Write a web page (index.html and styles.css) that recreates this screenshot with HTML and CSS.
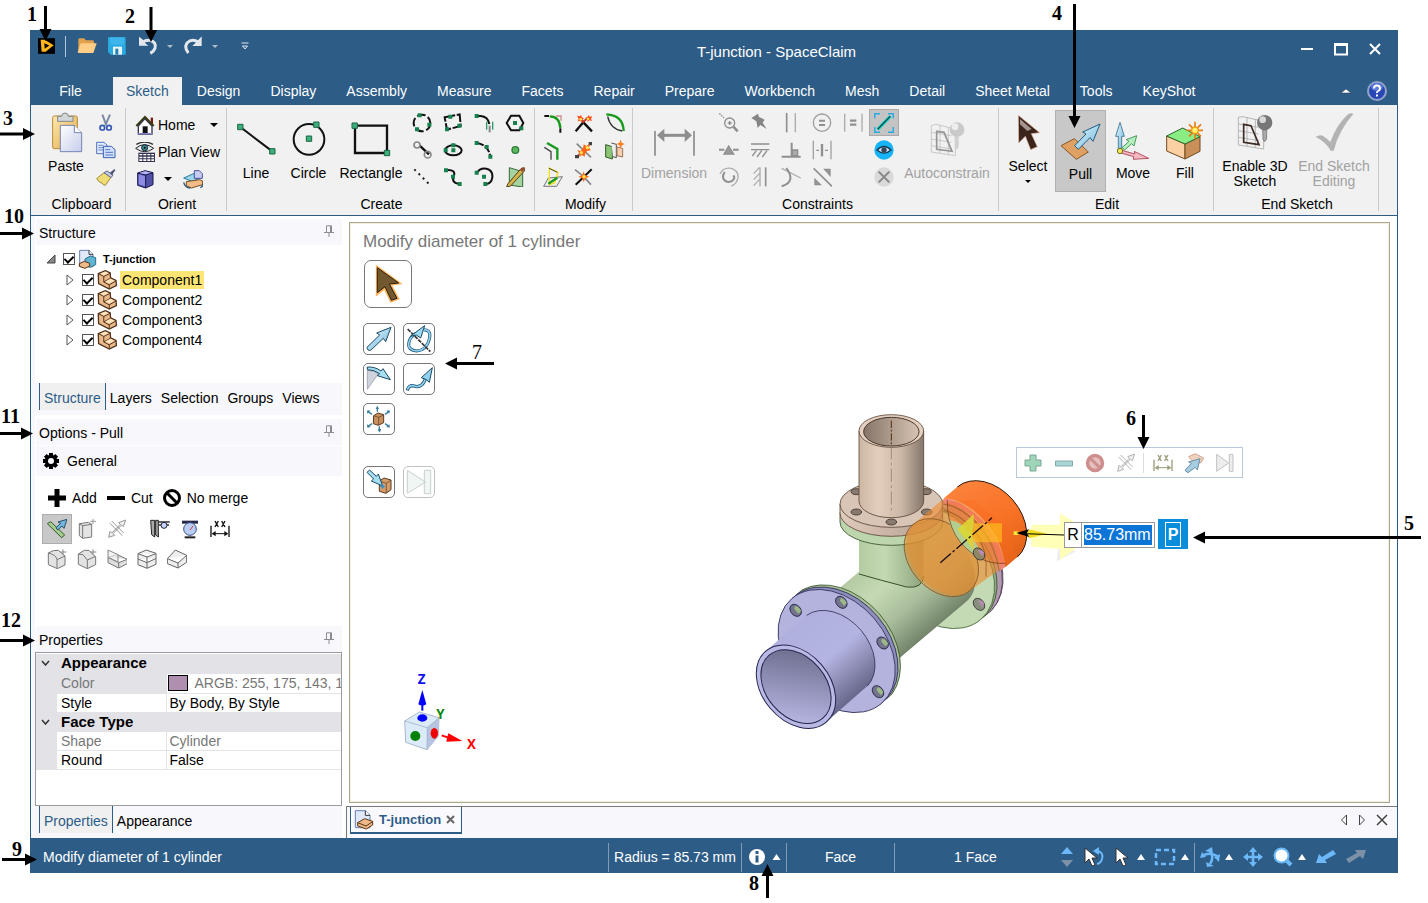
FILE: index.html
```html
<!DOCTYPE html>
<html lang="en">
<head>
<meta charset="utf-8">
<title>T-junction - SpaceClaim</title>
<link rel="stylesheet" href="styles.css">
</head>
<body>
<svg class="defs" aria-hidden="true">
  <defs>
    <linearGradient id="steel" x1="0" y1="0" x2="1" y2="1"><stop offset="0" stop-color="#e4f6fd"/><stop offset="1" stop-color="#6fb9dc"/></linearGradient>
    <linearGradient id="gold" x1="0" y1="0" x2="1" y2="1"><stop offset="0" stop-color="#ffe9b0"/><stop offset="1" stop-color="#e0aa45"/></linearGradient>
    <linearGradient id="paper" x1="0" y1="0" x2="1" y2="1"><stop offset="0" stop-color="#ffffff"/><stop offset="1" stop-color="#c5cdea"/></linearGradient>
    <linearGradient id="wood" x1="0" y1="0" x2="1" y2="1"><stop offset="0" stop-color="#fbd7ae"/><stop offset="1" stop-color="#c58350"/></linearGradient>
    <symbol id="pin" viewBox="0 0 10 12"><path d="M2.500 7V.8h5V7M6.500 1v6M0 7.500h10M5 7.500V12" fill="none" stroke="#8b8b90"/></symbol>
    <symbol id="part" viewBox="288 190 62 60"><path d="M292 200l22-9 15 7 1 15 17 8 1 16-22 11-33-17z" fill="#e9b98a" stroke="#4d2f1a" stroke-width="4"/><path d="M294 201l15 8 20-10M309 209v17l17 9 21-12M326 235v12M309 226l20-11" fill="none" stroke="#4d2f1a" stroke-width="3"/><path d="M298 200l16-6 10 5-15 7zM313 225l17-9 12 6-16 9z" fill="#ffe3bf"/></symbol>
    <symbol id="tri-up" viewBox="0 0 8 6"><path d="M0 6L4 0l4 6z" fill="#fff"/></symbol>
    <symbol id="tri-down" viewBox="0 0 8 4"><path d="M0 0h8L4 4z" fill="currentColor"/></symbol>
    <symbol id="widthmark" viewBox="0 0 60 60"><path d="M3 20v34M57 20v34" stroke="currentColor" stroke-width="4"/><path d="M10 44h40" stroke="currentColor" stroke-width="3"/><path d="M5 44l12-8v16zM55 44l-12-8v16z" fill="currentColor"/><path d="M15 6l10 18M25 6L15 24M35 6l10 18M45 6L35 24" stroke="currentColor" stroke-width="4"/></symbol>
    <symbol id="twoway" viewBox="0 0 60 60"><path d="M5 55l4-18 5 5 26-26-5-5L56 3l-7 20-5-5-26 26 5 5zM8 12l38 38M14 6l36 36" fill="#eee" stroke="currentColor" stroke-width="3"/></symbol>
  </defs>
</svg>

<div class="app">
  <header class="top">
    <div class="titlebar">
      <div class="quick">
        <button class="q q-logo" aria-label="Application"><svg width="17" height="16" viewBox="114 112 51 47"><path d="M114 112h51v47h-51z" fill="#000"/><path d="M122 117h12l27 16-24 20h-12z" fill="#ffb71b"/><path d="M133 127l15 7-14 10z" fill="#000"/></svg></button>
        <span class="qsep"></span>
        <button class="q q-open" aria-label="Open"><svg width="20" height="18" viewBox="226 112 60 54"><path d="M230 120q0-4 5-4h12l6 6h20q4 0 4 5v30h-47z" fill="#e0a04c"/><path d="M228 158l9-27h48l-10 29h-44z" fill="#ffce86"/></svg></button>
        <button class="q q-save" aria-label="Save"><svg width="18" height="18" viewBox="324 108 54 54"><path d="M324 109h53v52h-45l-8-8z" fill="#29abe2"/><path d="M330 109h42v22h-42z" fill="#3db5ea"/><path d="M339 137h27v24h-27z" fill="#e9f5fb"/><path d="M346 143h9v18h-9z" fill="#2681ad"/></svg></button>
        <button class="q q-undo" aria-label="Undo"><svg width="20" height="20" viewBox="414 106 60 60"><path d="M426 127q10-10 24-8 20 5 15 24-3 9-14 15" fill="none" stroke="#e4e8ee" stroke-width="9"/><path d="M417 108v27h28l-10-8-8-11z" fill="#e4e8ee"/></svg></button>
        <button class="q q-more" aria-label="Undo list"><svg width="6" height="3"><use href="#tri-down"/></svg></button>
        <button class="q q-redo" aria-label="Redo"><svg width="20" height="20" viewBox="550 106 60 60"><path d="M597 125q-20-13-35 2-9 15 4 30" fill="none" stroke="#e4e8ee" stroke-width="9"/><path d="M606 107v29h-28l9-9 11-11z" fill="#e4e8ee"/></svg></button>
        <button class="q q-more" aria-label="Redo list"><svg width="6" height="3"><use href="#tri-down"/></svg></button>
        <button class="q q-custom" aria-label="Customize"><svg width="8" height="9" viewBox="0 0 8 9"><path d="M.5 1h7M1.500 4h5L4 7z" fill="none" stroke="#e4e8ee"/></svg></button>
      </div>
      <h1 class="title">T-junction - SpaceClaim</h1>
      <div class="winbtns">
        <button aria-label="Minimize"><svg width="14" height="14"><path d="M1 7h12" stroke="#fff" stroke-width="2"/></svg></button>
        <button aria-label="Maximize"><svg width="14" height="14"><path d="M1 2h12v10.500H1zM1 3h12" fill="none" stroke="#fff" stroke-width="2"/></svg></button>
        <button aria-label="Close"><svg width="14" height="14"><path d="M2 2l10 10M12 2L2 12" stroke="#fff" stroke-width="2"/></svg></button>
      </div>
    </div>
    <nav class="tabs">
      <button class="tab file">File</button><button class="tab on">Sketch</button><button class="tab">Design</button><button class="tab">Display</button><button class="tab">Assembly</button><button class="tab">Measure</button><button class="tab">Facets</button><button class="tab">Repair</button><button class="tab">Prepare</button><button class="tab">Workbench</button><button class="tab">Mesh</button><button class="tab">Detail</button><button class="tab">Sheet Metal</button><button class="tab">Tools</button><button class="tab">KeyShot</button>
      <div class="tabs-end">
        <button aria-label="Collapse ribbon"><svg width="10" height="6" viewBox="0 0 10 6"><path d="M0 5l5-4 5 4z" fill="#fff" stroke="#334" stroke-width=".5"/></svg></button>
        <button aria-label="Help"><svg width="20" height="20" viewBox="0 0 20 20"><circle cx="10" cy="10" r="9" fill="#2847b4" stroke="#93a4c8" stroke-width="2"/><ellipse cx="10" cy="6" rx="6" ry="4" fill="#5b7bdc"/><path d="M7 7.500q0-3 3-3t3 3q0 1.500-1.700 2.500T10 12M10 13.500v2" fill="none" stroke="#fff" stroke-width="2"/></svg></button>
      </div>
    </nav>
  </header>

  <div class="ribbon">
    <section class="group g-clip">
      <div class="gbody">
        <button class="tool high"><svg viewBox="132 333 132 132"><rect x="158" y="348" width="74" height="98" rx="5" fill="url(#gold)" stroke="#b98a35" stroke-width="3"/><path d="M173 349h12q0-10 10-10t10 10h14v15h-46z" fill="#d4d7da" stroke="#83888c" stroke-width="3"/><path d="M181 376h42l22 22v57h-64z" fill="url(#paper)" stroke="#7484b5" stroke-width="3"/><path d="M223 376v22h22" fill="#fff" stroke="#7484b5" stroke-width="3"/></svg><span>Paste</span></button>
        <div class="stack">
          <button class="ib" aria-label="Cut"><svg viewBox="290 340 60 60"><path d="M309 345l12 32M332 345l-14 32" stroke="#7d8ca3" stroke-width="6"/><circle cx="309" cy="384" r="7" fill="none" stroke="#355bb5" stroke-width="5"/><circle cx="329" cy="384" r="7" fill="none" stroke="#355bb5" stroke-width="5"/></svg></button>
          <button class="ib" aria-label="Copy"><svg viewBox="290 418 60 60"><path d="M292 425h22l9 8v26h-31z" fill="#e4ecff" stroke="#5174bb" stroke-width="3"/><path d="M297 434h15M297 441h20M297 448h20" stroke="#5174bb" stroke-width="2.500"/><path d="M312 437h24l11 10v24h-35z" fill="#d2e0ff" stroke="#3c62ad" stroke-width="3"/><path d="M318 447h14M318 455h23M318 463h23" stroke="#3c62ad" stroke-width="2.500"/></svg></button>
          <button class="ib" aria-label="Format painter"><svg viewBox="290 500 60 60"><path d="M292 535l22-18 21 14-17 24q-8-1-10-7-9-1-16-13z" fill="#f0dd76" stroke="#9a8732" stroke-width="3"/><path d="M314 517l9-5 18 12-6 8z" fill="#c7cbe1" stroke="#63688e" stroke-width="3"/><path d="M331 518l14-12 3 4-10 14z" fill="#4f5577"/></svg></button>
        </div>
      </div>
      <h2>Clipboard</h2>
    </section>

    <section class="group g-orient">
      <div class="gbody orient">
        <button class="line"><svg viewBox="405 340 60 60"><path d="M452 348h7v20h-7z" fill="#7a1a14"/><path d="M415 373l20-22 21 22v24h-41z" fill="#fff" stroke="#34345a" stroke-width="4"/><path d="M409 373l26-27 26 27" fill="none" stroke="#3a3a14" stroke-width="6"/><path d="M428 374h15v22h-15z" fill="#111"/><path d="M414 396h42" stroke="#8484c8" stroke-width="4"/></svg><span>Home</span><svg class="caret" width="8" height="4"><use href="#tri-down"/></svg></button>
        <button class="line"><svg viewBox="405 420 60 60"><path d="M409 427q25-13 50 0" fill="none" stroke="#333" stroke-width="4"/><path d="M407 439q26-22 54 0-27 20-54 0z" fill="#e9eef0" stroke="#222" stroke-width="3"/><circle cx="434" cy="437" r="9" fill="#3f8c97" stroke="#123" stroke-width="3"/><circle cx="434" cy="437" r="3"/><path d="M415 452h50v28h-50z" fill="#33334f"/><path d="M418 456h9v4h-9zm12 0h9v4h-9zm12 0h9v4h-9zm12 0h8v4h-8zM418 464h9v5h-9zm12 0h9v5h-9zm12 0h9v5h-9zm12 0h8v5h-8zM418 472h9v5h-9zm12 0h9v5h-9zm12 0h9v5h-9zm12 0h8v5h-8z" fill="#fff"/></svg><span>Plan View</span></button>
        <div class="line">
          <button class="ib" aria-label="Isometric"><svg viewBox="405 500 60 60"><path d="M413 512l22-7 24 6v36l-22 10-24-8z" fill="#5252a8" stroke="#17174c" stroke-width="3"/><path d="M413 512l24 6 22-7M437 518v38" fill="none" stroke="#17174c" stroke-width="3"/><path d="M416 516l19 5v31l-19-6z" fill="#8c8ce0"/><path d="M418 512l17-5 18 4-16 5z" fill="#b9b9f4"/></svg></button>
          <svg class="caret" width="8" height="4"><use href="#tri-down"/></svg>
          <button class="ib spin" aria-label="Spin"><svg viewBox="548 500 60 60"><path d="M550 527l32-14 25 9-30 16z" fill="#9ad5ec" stroke="#317a9c" stroke-width="3"/><path d="M558 538l40-6 9 4v11l-34 10-15-7z" fill="#f1bd87" stroke="#7a4a22" stroke-width="3"/><path d="M582 505h15l9 9v14h-24z" fill="#c6cdf0" stroke="#47549e" stroke-width="3"/><path d="M550 540q4 16 20 17M600 556q8-3 8-12" fill="none" stroke="#2d5878" stroke-width="4"/></svg></button>
        </div>
      </div>
      <h2>Orient</h2>
    </section>

    <section class="group g-create">
      <div class="gbody">
        <button class="tool w-line"><svg viewBox="702 351 132 132"><path d="M721 381l96 73" stroke="#111" stroke-width="6"/><path d="M713 373h16v16h-16zM809 446h16v16h-16z" fill="#3fae7c" stroke="#176844" stroke-width="3"/></svg><span>Line</span></button>
        <button class="tool w-circle"><svg viewBox="858 351 132 132"><circle cx="924" cy="418" r="46" fill="none" stroke="#111" stroke-width="6"/><path d="M938 366h16v16h-16zM916 408h16v16h-16z" fill="#3fae7c" stroke="#176844" stroke-width="3"/></svg><span>Circle</span></button>
        <button class="tool w-rect"><svg viewBox="1046 351 132 132"><path d="M1064 377h96v82h-96z" fill="none" stroke="#111" stroke-width="7"/><path d="M1055 369h16v16h-16zM1152 451h16v16h-16z" fill="#3fae7c" stroke="#176844" stroke-width="3"/></svg><span>Rectangle</span></button>
        <div class="icons c4">
          <button class="ib" aria-label="Three-point circle"><svg viewBox="37 130 60 60"><circle cx="67" cy="160" r="25" fill="none" stroke="#111" stroke-width="6" stroke-dasharray="26 8"/><path d="M54 131h12v12H54zM83 159h12v12H83zM46 173h12v12H46z" fill="#17804f"/></svg></button>
          <button class="ib" aria-label="Three-point rectangle"><svg viewBox="132 130 60 60"><path d="M137 143l45-9 3 35-41 11z" fill="none" stroke="#111" stroke-width="6" stroke-dasharray="32 5"/><path d="M148 135h12v12h-12zM175 162h12v12h-12zM138 173h12v12h-12z" fill="#17804f"/></svg></button>
          <button class="ib" aria-label="Tangent arc"><svg viewBox="226 130 60 60"><path d="M232 139h14q22 2 26 24" fill="none" stroke="#111" stroke-width="6"/><path d="M264 156v24M282 156v24" stroke="#2e9a68" stroke-width="4"/><path d="M273 168v20" stroke="#888" stroke-width="6"/><path d="M228 133h12v12h-12z" fill="#17804f"/></svg></button>
          <button class="ib" aria-label="Polygon"><svg viewBox="316 130 60 60"><path d="M321 160l13-22h25l12 22-12 22h-25z" fill="none" stroke="#111" stroke-width="6"/><path d="M340 154h12v12h-12zM359 170h12v12h-12z" fill="#17804f"/></svg></button>
          <button class="ib" aria-label="Tangent line"><svg viewBox="37 210 60 60"><path d="M60 227l28 26" stroke="#111" stroke-width="7"/><circle cx="52" cy="225" r="9" fill="none" stroke="#888" stroke-width="5"/><circle cx="84" cy="254" r="10" fill="none" stroke="#888" stroke-width="5"/></svg></button>
          <button class="ib" aria-label="Ellipse"><svg viewBox="132 210 60 60"><ellipse cx="163" cy="241" rx="25" ry="15" fill="none" stroke="#111" stroke-width="6"/><path d="M157 220h12v12h-12zM157 235h12v12h-12zM134 235h12v12h-12z" fill="#17804f"/></svg></button>
          <button class="ib" aria-label="Three-point arc"><svg viewBox="226 210 60 60"><path d="M234 219q35 5 41 41" fill="none" stroke="#111" stroke-width="6" stroke-dasharray="22 5"/><path d="M228 213h12v12h-12zM258 225h12v12h-12zM269 254h12v12h-12z" fill="#17804f"/></svg></button>
          <button class="ib" aria-label="Point"><svg viewBox="316 210 60 60"><circle cx="347" cy="240" r="10" fill="#5cb85c" stroke="#2b7c38" stroke-width="4"/></svg></button>
          <button class="ib" aria-label="Construction line"><svg viewBox="37 290 60 60"><path d="M44 297l48 48" stroke="#222" stroke-width="6" stroke-dasharray="6 12"/></svg></button>
          <button class="ib" aria-label="Spline"><svg viewBox="132 290 60 60"><path d="M141 299q32-3 23 20-8 19 18 22" fill="none" stroke="#111" stroke-width="6"/><path d="M135 294h12v12h-12zM156 313h12v12h-12zM176 335h12v12h-12z" fill="#17804f"/></svg></button>
          <button class="ib" aria-label="Sweep arc"><svg viewBox="226 290 60 60"><path d="M235 308q8-16 28-13 20 4 18 26-3 20-20 20" fill="none" stroke="#111" stroke-width="6"/><path d="M228 301h12v12h-12zM250 313h12v12h-12zM254 335h12v12h-12z" fill="#17804f"/></svg></button>
          <button class="ib" aria-label="Face curve"><svg viewBox="316 290 60 60"><path d="M329 292l40 12v46l-40-6z" fill="#a5d4a0" stroke="#35693a" stroke-width="3"/><path d="M324 341l40-46 10-3v10l-41 45-12 3z" fill="#d3b44b" stroke="#54401d" stroke-width="3"/><path d="M360 298l8-7 7 6-7 8z" fill="#9b4a2f"/></svg></button>
        </div>
      </div>
      <h2>Create</h2>
    </section>

    <section class="group g-modify">
      <div class="gbody">
        <div class="icons c3">
          <button class="ib" aria-label="Rounded corner"><svg viewBox="432 130 60 60"><path d="M436 139h14M484 176v13" stroke="#111" stroke-width="6"/><path d="M452 140q30 0 32 35" fill="none" stroke="#179a1c" stroke-width="7"/><path d="M471 139h15v14" fill="none" stroke="#c98f8f" stroke-width="4"/></svg></button>
          <button class="ib" aria-label="Trim away"><svg viewBox="522 130 60 60"><path d="M527 185l23-27 26 27" fill="none" stroke="#111" stroke-width="7"/><path d="M539 144l11 13 13-13" stroke="#c43c2a" fill="none" stroke-width="6"/><path d="M531 138l8 2 5-4 1 7 7 3-6 4v8l-6-5-7 2 3-8zM557 145l6-3 2-6 4 5 8-1-4 7 3 7-8-2-5 5-1-7z" fill="#ff4a16"/><circle cx="542" cy="149" r="4" fill="#ffe54a"/><circle cx="564" cy="148" r="4" fill="#ffe54a"/></svg></button>
          <button class="ib" aria-label="Offset curve"><svg viewBox="612 130 60 60"><path d="M616 134q50 2 52 50" fill="none" stroke="#179a1c" stroke-width="7"/><path d="M620 140q8 38 44 44" fill="none" stroke="#333" stroke-width="4"/></svg></button>
          <button class="ib" aria-label="Offset"><svg viewBox="432 210 60 60"><path d="M444 219l31 18v32" fill="none" stroke="#179a1c" stroke-width="7"/><path d="M436 232l20 13v24" fill="none" stroke="#444" stroke-width="4"/></svg></button>
          <button class="ib" aria-label="Split"><svg viewBox="522 210 60 60"><path d="M530 221l43 41M527 262l48-44" stroke="#888" stroke-width="5"/><path d="M525 255h12v10h-12zM566 216h10v10h-10z" fill="#444"/><path d="M532 240l10 3 8-11 1-9 8 5 10-5-2 10 6 8-11 1-7 10-1 9-8-6-9 5 1-10z" fill="#ff6218"/><circle cx="544" cy="248" r="5" fill="#ffe54a"/><circle cx="562" cy="233" r="5" fill="#ffe54a"/></svg></button>
          <button class="ib" aria-label="Replicate"><svg viewBox="612 210 60 60"><path d="M614 224l20 6v37l-20-6z" fill="#8cc475" stroke="#2f5c2b" stroke-width="3"/><path d="M631 219l15 4v40l-10-3" fill="#eee" stroke="#555" stroke-width="3"/><path d="M648 231l17 4v26l-17-4z" fill="#f7cfae" stroke="#9c7759" stroke-width="3"/><path d="M659 208l3 10 10 4-9 4-4 10-4-10-9-4 9-4z" fill="#ff8425"/></svg></button>
          <button class="ib" aria-label="Project"><svg viewBox="432 290 60 60"><path d="M434 348l14-25 42-4-17 29z" fill="#eee" stroke="#777" stroke-width="3"/><path d="M451 293v50l16-5 10-32z" fill="none" stroke="#f3e11a" stroke-width="4"/><path d="M450 294l25 12" stroke="#444" stroke-width="3"/><path d="M448 340l27-18" stroke="#179a1c" stroke-width="7"/></svg></button>
          <button class="ib" aria-label="Split at point"><svg viewBox="522 290 60 60"><path d="M525 298l25 20 23 25" fill="none" stroke="#888" stroke-width="5"/><path d="M527 343l48-46" stroke="#111" stroke-width="6"/><path d="M551 303l4 11 13 5-12 5-5 12-4-12-12-5 12-4z" fill="#ff681c"/><circle cx="552" cy="319" r="5" fill="#ffe83b"/></svg></button>
        </div>
      </div>
      <h2>Modify</h2>
    </section>

    <section class="group g-cons">
      <div class="gbody">
        <button class="tool w-dim" disabled><svg viewBox="67 141 132 132"><path d="M76 183v74M193 183v74" stroke="#9c9c9c" stroke-width="6"/><path d="M92 196h84" stroke="#8e8e8e" stroke-width="9"/><path d="M82 196l22-20v40zM187 196l-22-20v40z" fill="#8e8e8e"/></svg><span>Dimension</span></button>
        <div class="icons c6 gray">
          <button class="ib" aria-label="Show constraints"><svg viewBox="267 130 60 60"><path d="M268 131l14 14" stroke-dasharray="5 3"/><circle cx="299" cy="160" r="15"/><path d="M310 171l13 14" stroke-width="8"/><path d="M293 160h12M299 154v12"/></svg></button>
          <button class="ib" aria-label="Fix"><svg viewBox="359 130 60 60"><path d="M363 145l20-13 3 10 17 8-6 9 12 19-19-12-8 9-4-20z" fill="#858585" stroke="none"/></svg></button>
          <button class="ib" aria-label="Parallel"><svg viewBox="452 130 60 60"><path d="M469 130v58" stroke-width="5"/><path d="M495 130v58" opacity=".7"/></svg></button>
          <button class="ib" aria-label="Equal radius"><svg viewBox="545 130 60 60"><circle cx="575" cy="159" r="26" opacity=".85"/><path d="M566 153h18M566 166h18" stroke-width="6"/></svg></button>
          <button class="ib" aria-label="Equal distance"><svg viewBox="637 130 60 60"><path d="M642 132v54M694 132v54" opacity=".7"/><path d="M658 153h19M658 165h19" stroke-width="7"/></svg></button>
          <button class="ib sel" aria-label="Auto dimension"><svg viewBox="732 129 60 60"><path d="M734 145v-14h16M774 131h16v14M734 171v16h16M774 187h16v-16" stroke="#2ca9df" stroke-width="5"/><path d="M743 178l38-39" stroke="#16d9d0" stroke-width="10"/><path d="M743 178l38-39" stroke="#064d4a" stroke-width="4"/></svg></button>
          <button class="ib" aria-label="Midpoint"><svg viewBox="267 210 60 60"><path d="M267 239h16M309 239h17" stroke-width="6"/><path d="M282 252l14-24 15 24z" fill="#999"/></svg></button>
          <button class="ib" aria-label="Coincident"><svg viewBox="359 210 60 60"><path d="M362 222h55M362 239h55M378 242l-12 16M394 242l-14 19M410 242l-14 19"/></svg></button>
          <button class="ib" aria-label="Perpendicular"><svg viewBox="452 210 60 60"><path d="M484 218v42M454 260h57" stroke-width="6"/><path d="M486 240h16v17h-16z" fill="#aaa"/></svg></button>
          <button class="ib" aria-label="Symmetric"><svg viewBox="545 210 60 60"><path d="M549 212v56M602 212v56" opacity=".8"/><path d="M575 222v37" stroke-width="7"/><path d="M558 241h8M584 241h9"/></svg></button>
          <i></i>
          <button class="ib" aria-label="Visibility"><svg viewBox="732 210 60 60"><circle cx="762" cy="240" r="29" fill="#16b4f4" stroke="none"/><path d="M741 240q21-21 42 0-21 19-42 0z" fill="#cdf" stroke="#123b50" stroke-width="4"/><circle cx="762" cy="240" r="8" fill="#345" stroke="none"/></svg></button>
          <button class="ib" aria-label="Concentric"><svg viewBox="267 290 60 60"><path d="M270 311q10-21 34-17 22 7 20 28-4 20-20 25" opacity=".7"/><path d="M284 305q-11 17 2 27 15 8 25-5 4-7-1-12" stroke-width="6"/></svg></button>
          <button class="ib" aria-label="Hatched"><svg viewBox="359 290 60 60"><path d="M389 291v57M387 292l-17 18M387 310l-17 18M387 328l-17 18" opacity=".7"/><path d="M406 291v57" stroke-width="5"/></svg></button>
          <button class="ib" aria-label="Tangent"><svg viewBox="452 290 60 60"><path d="M454 294l57 29" opacity=".7"/><path d="M468 293q30 42-14 55" stroke-width="6"/></svg></button>
          <button class="ib" aria-label="Mirror"><svg viewBox="545 290 60 60"><path d="M550 294l55 54" stroke-width="5"/><path d="M583 297h16v18zM554 327v16h16z" fill="#999"/></svg></button>
          <i></i>
          <button class="ib" aria-label="Remove constraints"><svg viewBox="732 290 60 60"><circle cx="762" cy="320" r="29" fill="#d9d9d9" stroke="none"/><path d="M746 304l32 32M778 304l-32 32" stroke="#868686" stroke-width="6"/></svg></button>
        </div>
        <button class="tool w-auto" disabled><svg viewBox="885 141 132 132" opacity=".75"><path d="M904 167l14-4 58 14v80l-72-11zM904 187l60 10M904 207l60 10M904 227l62 10M930 166v84M955 172v82" fill="none" stroke="#b1b1b1" stroke-width="2.500"/><path d="M920 184l22 3 24 57-46-6z" fill="none" stroke="#777" stroke-width="5"/><circle cx="981" cy="179" r="22" fill="#bdbdbd"/><circle cx="975" cy="170" r="10" fill="#eee"/><path d="M974 201l12-2v30l-5 10-5-8z" fill="#c5c5c5"/></svg><span>Autoconstrain</span></button>
      </div>
      <h2>Constraints</h2>
    </section>

    <section class="group g-edit">
      <div class="gbody">
        <button class="tool high w-sel"><svg viewBox="18 333 132 132"><path d="M55 346l64 52-25 3 18 39-20 9-16-40-20 20z" fill="#3a241c" stroke="#e8b9a0" stroke-width="2"/><path d="M60 357l35 30-13 6-22-20z" fill="#a59490"/></svg><span>Select</span><svg class="caret" width="6" height="3"><use href="#tri-down"/></svg></button>
        <button class="tool on w-pull"><svg viewBox="175 360 132 132"><path d="M181 440l40-21 42 40-36 22z" fill="#dfa163" stroke="#8a5525" stroke-width="3"/><path d="M222 440l34-35-10-6 52-24-21 52-9-11-35 35z" fill="url(#steel)" stroke="#245b80" stroke-width="3"/></svg><span>Pull</span></button>
        <button class="tool w-move"><svg viewBox="334 351 132 132"><path d="M356 450v-41h-8l13-42 13 42h-8v41z" fill="url(#steel)" stroke="#3a6e8d" stroke-width="2.500"/><path d="M367 443l21-19-8-5 31-12-8 31-7-7-21 19z" fill="#b5efc0" stroke="#2d8a45" stroke-width="2.500"/><path d="M367 451l39 11-2-8 43 21-46 3 1-8-38-11z" fill="#f4b9c1" stroke="#a8384b" stroke-width="2.500"/><circle cx="361" cy="453" r="8" fill="#efe95a" stroke="#77701f" stroke-width="3"/></svg><span>Move</span></button>
        <button class="tool w-fill"><svg viewBox="489 351 132 132"><path d="M500 408l55 24v45l-55-24z" fill="#fbd0a3" stroke="#734a23" stroke-width="3"/><path d="M555 432l45-22v44l-45 23z" fill="#c98f58" stroke="#734a23" stroke-width="3"/><path d="M500 408l48-24 52 26-45 22z" fill="#8aed83" stroke="#2b6430" stroke-width="3"/><path d="M585 365v52M560 391h49M567 373l36 36M603 373l-36 36" stroke="#e67e16" stroke-width="5"/><circle cx="585" cy="391" r="10" fill="#fff36b" stroke="#f19b19" stroke-width="4"/></svg><span>Fill</span></button>
      </div>
      <h2>Edit</h2>
    </section>

    <section class="group g-end">
      <div class="gbody">
        <button class="tool high w-enable"><svg viewBox="701 333 132 132"><path d="M717 352l14-2 62 14v83l-76-12zM717 372l60 10M717 392l60 10M717 412l62 10M743 352v86M768 358v84" fill="none" stroke="#aaa" stroke-width="2.500"/><path d="M733 373l22 4 24 57-46-7z" fill="none" stroke="#3c2b22" stroke-width="5"/><circle cx="796" cy="368" r="23" fill="#777"/><circle cx="790" cy="359" r="10" fill="#d7d7d7"/><path d="M790 391l12-2v28l-6 8-5-6z" fill="#aaa" stroke="#666" stroke-width="2"/></svg><span>Enable 3D<br>Sketch</span></button>
        <button class="tool high w-finish" disabled><svg viewBox="937 333 132 132"><path d="M948 410q14-8 22-2 14 9 22 18 20-55 54-84 10-4 15 0-43 48-59 110h-9q-12-24-45-42z" fill="#b3b3b3"/></svg><span>End Sketch<br>Editing</span></button>
      </div>
      <h2>End Sketch</h2>
    </section>
  </div>

  <div class="work">
    <aside class="side">
      <section class="panel p-structure">
        <h2 class="phead">Structure<svg width="10" height="12"><use href="#pin"/></svg></h2>
        <ul class="tree">
          <li class="root"><svg width="10" height="10"><path d="M9 1v8H1z" fill="#888" stroke="#444"/></svg><input type="checkbox" id="t0" checked><svg width="20" height="20" viewBox="232 130 60 60"><path d="M237 134h28l12 11v38h-40z" fill="#e0e9f7" stroke="#6580b5" stroke-width="3"/><path d="M265 134v12h12" fill="#fff" stroke="#333" stroke-width="3"/><path d="M253 160l16-9 16 5v21l-16 8-16-5z" fill="#60b5d2" stroke="#2b6f8a" stroke-width="3"/><path d="M236 174l15-7 16 6v8l-14 7-17-6z" fill="#eebb88" stroke="#5a3317" stroke-width="3"/></svg><label for="t0">T-junction</label></li>
          <li><svg width="8" height="12"><path d="M1 1l6 5-6 5z" fill="#fff" stroke="#555"/></svg><input type="checkbox" id="t1" checked><svg width="20" height="20"><use href="#part"/></svg><label for="t1" class="hit">Component1</label></li>
          <li><svg width="8" height="12"><path d="M1 1l6 5-6 5z" fill="#fff" stroke="#555"/></svg><input type="checkbox" id="t2" checked><svg width="20" height="20"><use href="#part"/></svg><label for="t2">Component2</label></li>
          <li><svg width="8" height="12"><path d="M1 1l6 5-6 5z" fill="#fff" stroke="#555"/></svg><input type="checkbox" id="t3" checked><svg width="20" height="20"><use href="#part"/></svg><label for="t3">Component3</label></li>
          <li><svg width="8" height="12"><path d="M1 1l6 5-6 5z" fill="#fff" stroke="#555"/></svg><input type="checkbox" id="t4" checked><svg width="20" height="20"><use href="#part"/></svg><label for="t4">Component4</label></li>
        </ul>
        <div class="ptabs"><button class="on">Structure</button><button>Layers</button><button>Selection</button><button>Groups</button><button>Views</button></div>
      </section>

      <section class="panel p-options">
        <h2 class="phead">Options - Pull<svg width="10" height="12"><use href="#pin"/></svg></h2>
        <h3 class="general"><svg width="18" height="18" viewBox="-9 -9 18 18"><path d="M0-8V8M-8 0H8M-5.700-5.700L5.700 5.700M5.700-5.700L-5.700 5.700" stroke="#000" stroke-width="4"/><circle r="4.500" fill="none" stroke="#000" stroke-width="3.500"/><circle r="3" fill="#f7f7fc"/></svg>General</h3>
        <div class="opts">
          <div class="merge">
            <button><svg width="18" height="18"><path d="M9 0v18M0 9h18" stroke="#000" stroke-width="5"/></svg>Add</button>
            <button><svg width="18" height="18"><path d="M0 9h18" stroke="#000" stroke-width="4"/></svg>Cut</button>
            <button><svg width="18" height="18"><circle cx="9" cy="9" r="7.500" fill="none" stroke="#000" stroke-width="3"/><path d="M4 4l10 10" stroke="#000" stroke-width="3"/></svg>No merge</button>
          </div>
          <div class="orow">
            <button class="on" aria-label="Pull direction"><svg viewBox="141 357 60 60"><path d="M142 371l10-6 42 40-9 8z" fill="#a4cc8b" stroke="#35562b" stroke-width="3"/><path d="M168 383l14-13-8-4 27-8-9 27-6-7-13 12z" fill="#73b7db" stroke="#234f6d" stroke-width="3"/></svg></button>
            <button aria-label="Copy face"><svg viewBox="232 355 60 60"><path d="M239 369l27-4 10 6v38l-27 4-10-8zM239 369l10 6v37M249 375l27-4" fill="#e4e4e4" stroke="#777" stroke-width="3"/><path d="M280 354v16M272 362h17" stroke="#999" stroke-width="3"/></svg></button>
            <button aria-label="Both sides" class="dim"><svg><use href="#twoway"/></svg></button>
            <button aria-label="Caliper" class="gap"><svg viewBox="450 355 60 60"><path d="M452 359h12v50l-9-7zM467 359h8v50l-8-6z" fill="#aaa" stroke="#222" stroke-width="3"/><path d="M475 364h34M477 373h30" stroke="#333" stroke-width="4"/><circle cx="492" cy="374" r="9" fill="#c8d7ff" stroke="#223" stroke-width="3"/></svg></button>
            <button aria-label="Mass"><svg viewBox="540 355 60 60"><path d="M546 360h48v9h-48z" fill="#27294a"/><circle cx="570" cy="385" r="19" fill="#b9cef4" stroke="#3c4c80" stroke-width="3"/><path d="M554 410h32" stroke="#222" stroke-width="6"/><path d="M570 388l9-12" stroke="#d33" stroke-width="3"/></svg></button>
            <button aria-label="Ruler"><svg color="#111"><use href="#widthmark"/></svg></button>
          </div>
          <div class="orow">
            <button aria-label="Round"><svg viewBox="138 445 60 60"><path d="M142 457q14-10 30-8l20 17v27l-23 11-27-12zM142 457q22 4 26 20v26M168 477l24-11" fill="#e3e3e3" stroke="#777" stroke-width="3"/><path d="M186 446v16M178 454h18" stroke="#888" stroke-width="3"/></svg></button>
            <button aria-label="Chamfer"><svg viewBox="228 445 60 60"><path d="M232 460l18-11h14l20 20v23l-25 12-27-13zM232 460l14 2 13 16v26M259 478l25-11" fill="#e3e3e3" stroke="#777" stroke-width="3"/><path d="M276 446v16M268 454h18" stroke="#888" stroke-width="3"/></svg></button>
            <button aria-label="Extrude edge"><svg viewBox="318 445 60 60"><path d="M321 470l28-8 30 14v13l-26 13-32-16zM321 470l32 16 26-10M353 486v16" fill="#dedede" stroke="#777" stroke-width="3"/><path d="M321 448l30 14v22l-30-14z" fill="#eee" fill-opacity=".7" stroke="#888" stroke-width="3"/></svg></button>
            <button aria-label="Copy edge"><svg viewBox="409 445 60 60"><path d="M412 459l25-11 29 10v33l-27 12-27-11zM412 459l27 10 27-10M439 469v33M412 475l27 11 26-12" fill="#eee" stroke="#666" stroke-width="3"/></svg></button>
            <button aria-label="Pivot edge"><svg viewBox="499 445 60 60"><path d="M500 474l24-26 34 16v21l-26 17-32-13zM500 474l32 13 26-23M532 487v15" fill="#eee" stroke="#666" stroke-width="3"/></svg></button>
          </div>
        </div>
      </section>

      <section class="panel p-props">
        <h2 class="phead">Properties<svg width="10" height="12"><use href="#pin"/></svg></h2>
        <div class="grid">
          <table>
            <colgroup><col class="col-gut"><col class="col-key"><col></colgroup>
            <tbody>
              <tr class="cat"><td class="gut"><svg width="9" height="6"><path d="M1 1l3.500 4L8 1" fill="none" stroke="#333" stroke-width="1.500"/></svg></td><th colspan="2">Appearance</th></tr>
              <tr class="mute shade"><td class="gut"></td><td class="key">Color</td><td class="val color"><span class="swatch"></span>ARGB: 255, 175, 143, 1</td></tr>
              <tr><td class="gut"></td><td class="key">Style</td><td class="val">By Body, By Style</td></tr>
              <tr class="cat"><td class="gut"><svg width="9" height="6"><path d="M1 1l3.500 4L8 1" fill="none" stroke="#333" stroke-width="1.500"/></svg></td><th colspan="2">Face Type</th></tr>
              <tr class="mute"><td class="gut"></td><td class="key">Shape</td><td class="val">Cylinder</td></tr>
              <tr><td class="gut"></td><td class="key">Round</td><td class="val">False</td></tr>
            </tbody>
          </table>
        </div>
        <div class="ptabs"><button class="on">Properties</button><button>Appearance</button></div>
      </section>
    </aside>

    <main class="main">
      <div class="view">
        <p class="hint">Modify diameter of 1 cylinder</p>
        <button class="guide big" aria-label="Select"><svg width="40" height="40" viewBox="70 147 120 120"><path d="M97 156l68 49-27 4 22 42-21 8-19-39-23 18z" fill="#715531" stroke="#fdb45c" stroke-width="7"/><path d="M98 158l64 46-28 3 23 43-17 6-19-41-23 18z" fill="#71582f" stroke="#2b1f10" stroke-width="3"/></svg></button>
        <div class="guides">
          <button class="guide" aria-label="Pull direction"><svg viewBox="57 327 90 90"><path d="M66 397l38-37-9-6 43-17-16 43-7-10-38 36q-10 2-11-9z" fill="url(#steel)" stroke="#1d4a63" stroke-width="3"/></svg></button>
          <button class="guide" aria-label="Revolve"><svg viewBox="177 327 90 90"><path d="M236 344q24 0 17 28-8 34-39 36-25-3-23-22 3-20 20-30" fill="none" stroke="#174e6d" stroke-width="9"/><path d="M236 344q24 0 17 28-8 34-39 36-25-3-23-22 3-20 20-30" fill="none" stroke="#8fd2f0" stroke-width="5"/><path d="M188 342l68 68" stroke="#333" stroke-width="5" stroke-dasharray="12 3"/><path d="M196 364l43-32-12 37-13-9z" fill="#9bdcf5" stroke="#1d4a63" stroke-width="3"/></svg></button>
          <button class="guide" aria-label="Draft"><svg viewBox="57 447 90 90"><path d="M67 466v57l33-47q-14-10-33-10z" fill="#cfd3dd" stroke="#8a8f9e" stroke-width="2"/><path d="M67 456q24-1 41 12l6-7 22 33-39-12 7-6q-16-12-37-12z" fill="#a5ddf3" stroke="#1d4a63" stroke-width="3"/></svg></button>
          <button class="guide" aria-label="Sweep"><svg viewBox="177 447 90 90"><path d="M187 526q4-17 20-13 22 8 34-20" fill="none" stroke="#174e6d" stroke-width="10"/><path d="M187 524q6-15 20-11 22 8 34-20" fill="none" stroke="#8fd2f0" stroke-width="5"/><path d="M229 488l33-30-9 44-9-8z" fill="#8fd2f0" stroke="#1d4a63" stroke-width="3"/></svg></button>
          <button class="guide" aria-label="Scale"><svg viewBox="57 567 90 90"><path d="M86 602l13-8 17 5v24l-16 8-15-5z" fill="#c98f5e" stroke="#5a3a20" stroke-width="3"/><path d="M86 602l15 5 15-7M101 607v23" stroke="#5a3a20" fill="none" stroke-width="2"/><path d="M97 590v-14M103 634v15M81 598l-13-9M120 598l13-9M81 626l-13 9M120 626l13 9" stroke="#3a7ea1" stroke-width="4"/><path d="M92 582l5-10 5 10zM98 642l6 11 5-11zM66 596l1-10 10 1zM124 587l10-1-1 10zM66 628l1 10 10-2zM124 636l10 2-1-10z" fill="#3a7ea1"/></svg></button>
        </div>
        <div class="guides second">
          <button class="guide" aria-label="Up to"><svg viewBox="57 756 90 90"><path d="M103 798l14-9 21 6v29l-15 11-20-6z" fill="#d39c69" stroke="#5a3a20" stroke-width="3"/><path d="M103 798l21 7 14-10M124 805v29" fill="none" stroke="#5a3a20" stroke-width="2"/><path d="M66 772l8-7 20 19 6-7 13 36-34-15 7-6z" fill="#a5ddf3" stroke="#1d4a63" stroke-width="3"/><path d="M113 806l3 6 6 2-6 3-3 6-3-6-6-3 6-2z" fill="#2b94d6"/></svg></button>
          <button class="guide faint" aria-label="Complete"><svg viewBox="177 756 90 90"><path d="M187 766l55 35-55 34zM238 766h19v70h-19z" fill="#dcece8" stroke="#8a9a96" stroke-width="3"/></svg></button>
        </div>

        <svg class="model" width="380" height="340" viewBox="0 0 1140 1020" role="img" aria-label="T-junction pipe model">
          <defs>
            <linearGradient id="tanp" x1="0" x2="1"><stop offset="0" stop-color="#cdb7a4"/><stop offset=".3" stop-color="#e3cebd"/><stop offset=".65" stop-color="#cdb8a7"/><stop offset="1" stop-color="#85776c"/></linearGradient>
            <linearGradient id="tani" x1="0" x2="1"><stop offset="0" stop-color="#857568"/><stop offset="1" stop-color="#d7c3b3"/></linearGradient>
            <linearGradient id="grnv" x1="0" x2="1"><stop offset="0" stop-color="#b4cca2"/><stop offset=".4" stop-color="#c3d9b2"/><stop offset="1" stop-color="#8da37e"/></linearGradient>
            <linearGradient id="grnp" gradientUnits="userSpaceOnUse" x1="360" y1="510" x2="540" y2="720"><stop offset="0" stop-color="#b4caa3"/><stop offset=".3" stop-color="#c5dab4"/><stop offset=".65" stop-color="#a9bd9b"/><stop offset="1" stop-color="#74856b"/></linearGradient>
            <linearGradient id="blup" gradientUnits="userSpaceOnUse" x1="135" y1="700" x2="320" y2="916"><stop offset="0" stop-color="#b0b0de"/><stop offset=".5" stop-color="#b4b4e2"/><stop offset=".8" stop-color="#8585ac"/><stop offset="1" stop-color="#66668a"/></linearGradient>
            <linearGradient id="blui" gradientUnits="userSpaceOnUse" x1="80" y1="780" x2="240" y2="960"><stop offset="0" stop-color="#6c6c8d"/><stop offset="1" stop-color="#babae8"/></linearGradient>
            <linearGradient id="rim" x1="0" x2="1"><stop offset="0" stop-color="#e0cabb"/><stop offset="1" stop-color="#b09c8d"/></linearGradient>
            <linearGradient id="hot" gradientUnits="userSpaceOnUse" x1="700" y1="250" x2="830" y2="480"><stop offset="0" stop-color="#fb8038"/><stop offset=".5" stop-color="#f87226"/><stop offset="1" stop-color="#df6216"/></linearGradient>
          </defs>
          <path d="M885 438l70 8-6 38 60-30z" fill="#eee"/>
          <path d="M874 374h86v-34l104 64-104 75v-33l-86-6z" fill="#ffffb8"/>
          <g stroke-width="2.500">
            <path d="M756 629A207 149 49.500 0 1 488 315L488 315A207 149 49.500 0 1 756 629z" fill="#b39ab3" stroke="#4c3a50"/>
            <path d="M738 645A207 149 49.500 0 1 470 331L486 318A207 149 49.500 0 1 754 632z" fill="#b39ab3" stroke="#4c3a50"/>
            <path d="M722 658A207 149 49.500 0 1 454 344L470 331A207 149 49.500 0 1 738 645z" fill="#93a988" stroke="#35502a"/>
            <ellipse cx="588" cy="501" rx="207" ry="149" transform="rotate(49.500 588 501)" fill="#c4dab4" stroke="#4b6a3b"/>
            <ellipse cx="717" cy="613" rx="20" ry="15" transform="rotate(49.500 717 613)" fill="#87907f" stroke="#333"/>
            <path d="M727 622l6-12q-8-12-19-8z" fill="#b78bb4"/>
          </g>
          <path d="M408 834L680 604A138 100 49.500 0 0 498 396L228 624z" fill="url(#grnp)"/>
          <path d="M357 400V522Q420 540 500 561 548 565 551 530V400z" fill="url(#grnv)"/>
          <path d="M357 522Q420 540 500 561 548 567 551 528" fill="none" stroke="#35502a" stroke-width="3"/>
          <path d="M300 338v28A154 70 0 0 0 608 366v-28z" fill="#bdd5ac" stroke="#35502a" stroke-width="2.500"/>
          <path d="M300 312v27A154 70 0 0 0 608 339v-27z" fill="url(#rim)" stroke="#5c4636" stroke-width="2.500"/>
          <ellipse cx="454" cy="312" rx="154" ry="70" fill="#d9c5b6" stroke="#5c4636" stroke-width="2.500"/>
          <g fill="#887a6e" stroke="#3d2f26" stroke-width="2.500"><ellipse cx="349" cy="336" rx="16" ry="9"/><ellipse cx="454" cy="366" rx="16" ry="9"/><ellipse cx="560" cy="336" rx="16" ry="9"/><ellipse cx="349" cy="275" rx="16" ry="9"/><ellipse cx="558" cy="275" rx="16" ry="9"/></g>
          <path d="M357 93V303A97 50 0 0 0 551 303V93z" fill="url(#tanp)" stroke="#5c4636" stroke-width="2.500"/>
          <ellipse cx="454" cy="93" rx="97" ry="49" fill="#e4d0c0" stroke="#5c4636" stroke-width="2.500"/>
          <ellipse cx="454" cy="95" rx="83" ry="43" fill="url(#tani)" stroke="#4a382c" stroke-width="3"/>
          <path d="M454 62v75" stroke="#5a2d0e" stroke-width="3" stroke-dasharray="22 5 6 5"/>
          <path d="M454 138v205" stroke="#8c735c" stroke-width="2" stroke-dasharray="40 10 8 10"/>
          <g stroke-width="2.500">
            <path d="M440 896A209 153 49.500 0 1 170 584L186 570A209 153 49.500 0 1 456 882z" fill="#aac197" stroke="#35502a"/>
            <path d="M424 910A207 149 49.500 0 1 156 596L172 582A207 151 49.500 0 1 440 896z" fill="#8d8dbb" stroke="#25254c"/>
            <ellipse cx="290" cy="753" rx="207" ry="149" transform="rotate(49.500 290 753)" fill="#b3b3de" stroke="#30305a"/>
            <g fill="#73738e" stroke="#22223e"><ellipse cx="167" cy="631" rx="20" ry="15" transform="rotate(49.500 167 631)"/><ellipse cx="304" cy="607" rx="20" ry="15" transform="rotate(49.500 304 607)"/><ellipse cx="428" cy="729" rx="20" ry="15" transform="rotate(49.500 428 729)"/><ellipse cx="414" cy="875" rx="20" ry="15" transform="rotate(49.500 414 875)"/></g>
            <path d="M175 641q8-4 8-10-6-11-16-14-5 5-4 10zM312 617q8-4 8-10-6-11-16-14-5 5-4 10zM436 739q8-4 8-10-6-11-16-14-5 5-4 10zM422 885q8-4 8-10-6-11-16-14-5 5-4 10z" fill="#9bb886"/>
            <path d="M259 966A140 101 49.500 0 1 77 754L200 646A140 101 49.500 0 1 382 858z" fill="url(#blup)"/>
            <path d="M200 646A140 101 49.500 0 1 382 858" fill="none" stroke="#30305a"/>
            <ellipse cx="168" cy="860" rx="140" ry="101" transform="rotate(49.500 168 860)" fill="#b9b9e6" stroke="#25254c" stroke-width="3"/>
            <ellipse cx="168" cy="860" rx="124" ry="89" transform="rotate(49.500 168 860)" fill="url(#blui)" stroke="#25254c" stroke-width="3"/>
          </g>
          <path d="M689 572A131 95 49.500 0 1 519 374L652 261A138 101 49.500 0 1 832 471z" fill="#f08a2c" opacity=".6"/>
          <path d="M612 295L652 261A138 101 49.500 0 1 832 471L796 502Q785 400 700 330 655 297 612 295z" fill="url(#hot)"/>
          <path d="M612 295Q665 300 725 360 785 425 796 500L782 512Q768 425 708 358 658 312 610 310z" fill="#ee8474"/>
          <path d="M624 306Q624 420 720 475 760 493 796 490V500L830 471 800 380 700 300z" fill="#fa6a1c" opacity=".35"/>
          <ellipse cx="604" cy="473" rx="131" ry="95" transform="rotate(49.500 604 473)" fill="#db9238" opacity=".55"/>
          <ellipse cx="604" cy="473" rx="131" ry="95" transform="rotate(49.500 604 473)" fill="none" stroke="#8a5a25" stroke-width="2.500"/>
          <path d="M625 360Q675 366 705 425 722 450 716 477 645 430 625 360z" fill="#b2cf91"/>
          <path d="M610 312Q665 320 715 375 768 440 778 515M612 332Q660 340 702 390 745 445 738 530" fill="none" stroke="#a05a28" stroke-width="2.500"/>
          <path d="M622 300Q620 420 720 475 755 493 796 490" fill="none" stroke="#84421c" stroke-width="2.500"/>
          <path d="M652 261A138 101 49.500 0 1 832 471" fill="none" stroke="#2b1a12" stroke-width="3"/>
          <ellipse cx="717" cy="462" rx="20" ry="15" transform="rotate(49.500 717 462)" fill="#8f8763" stroke="#333" stroke-width="2.500"/>
          <path d="M727 470l6-12q-8-12-19-6z" fill="#b78bb4"/>
          <path d="M653 388l48-45v27h85v57h-85v22z" fill="#ffc21b" opacity=".65"/>
          <path d="M653 388l48-45v27l-8 60 8 19z" fill="#cfe03a" opacity=".65"/>
          <path d="M601 488l155-135" stroke="#1d0f18" stroke-width="4" stroke-dasharray="42 7 8 7"/>
          <path d="M868 388l54 13-54 14-10-14z" fill="#f3dc21"/><path d="M821 394h14v11h-14z" fill="#f6e83d"/>
          <path d="M850 401l122 4" stroke="#000" stroke-width="3"/><path d="M829 399l38-11-7 12 8 11z"/>
        </svg>

        <div class="mini">
          <button aria-label="Add"><svg viewBox="0 0 20 20"><path d="M7 2h6v5h5v6h-5v5H7v-5H2V7h5z" fill="#9fd5b9" stroke="#7aa791"/></svg></button>
          <button aria-label="Cut"><svg viewBox="0 0 20 20"><path d="M1.500 8h17v5h-17z" fill="#a8d6d6" stroke="#84a8ac"/></svg></button>
          <button aria-label="No merge"><svg viewBox="0 0 20 20"><circle cx="10" cy="10" r="7.500" fill="#e6bebe" stroke="#cf8e8e" stroke-width="3.500"/><path d="M5 5l10 10" stroke="#cf8e8e" stroke-width="3"/></svg></button>
          <button aria-label="Both sides"><svg color="#b5b5b5"><use href="#twoway"/></svg></button>
          <span class="msep"></span>
          <button aria-label="Ruler"><svg color="#9c9c78"><use href="#widthmark"/></svg></button>
          <button aria-label="Up to"><svg viewBox="555 157 60 60"><path d="M569 168l20-9 25 13-8 14-20 2z" fill="#f0d1bd" stroke="#cfa58c" stroke-width="3"/><path d="M558 209l19-21-8-4 34-10-8 34-6-8-22 16z" fill="#a6cde2" stroke="#688ea5" stroke-width="3"/></svg></button>
          <button aria-label="Complete"><svg viewBox="648 157 60 60"><path d="M653 161l36 26-36 25zM691 161h11v51h-11z" fill="#ededed" stroke="#c2c2c2" stroke-width="3"/></svg></button>
        </div>
        <div class="entry"><label for="rad">R</label><input id="rad" type="text" value="85.73mm"></div>
        <button class="pbtn" aria-label="Create parameter"><b>P</b></button>

        <svg class="triad" width="90" height="84" viewBox="170 30 270 252"><path d="M178 183l44-27 59 17-2 55-34 41-64-22z" fill="#dcebf8" stroke="#8998b5" stroke-width="2"/><path d="M246 203l35-30-2 55-34 41z" fill="#b6c4df"/><path d="M178 183l68 20 35-30M246 203l-1 66" fill="none" stroke="#97a5c2" stroke-width="2"/><ellipse cx="231" cy="174" rx="15" ry="11" fill="#00f"/><circle cx="210" cy="228" r="15" fill="#058205"/><ellipse cx="267" cy="220" rx="11" ry="16" fill="#f40000"/><path d="M231 152v-24" stroke="#00f" stroke-width="6"/><path d="M231 90l12 43q-12 8-24 0z" fill="#00f"/><path d="M289 226l20 7" stroke="#f00" stroke-width="6"/><path d="M309 220l42 23-48 2q2-12 6-25z" fill="#f00"/><text x="217" y="72" fill="#1010f0">Z</text><text x="273" y="176" fill="#0a860a">Y</text><text x="365" y="268" fill="#f00">X</text></svg>
      </div>
      <div class="docs">
        <button class="doc"><svg width="20" height="20" viewBox="28 446 60 60"><path d="M32 448h30l14 13v38H32z" fill="#e0e9f7" stroke="#6580b5" stroke-width="3"/><path d="M62 448v14h14" fill="#fff" stroke="#333" stroke-width="3"/><path d="M39 484l21-12 24 8v11l-19 12-26-9z" fill="#eebb88" stroke="#5a3317" stroke-width="3"/><path d="M39 484l25 10 20-13" fill="none" stroke="#5a3317" stroke-width="3"/></svg><span>T-junction</span><svg width="9" height="9"><path d="M1 1l7 7M8 1L1 8" stroke="#666" stroke-width="2"/></svg></button>
        <div class="docnav">
          <button aria-label="Previous"><svg width="8" height="12"><path d="M6.500 1v10L1.500 6z" fill="none" stroke="#444"/></svg></button>
          <button aria-label="Next"><svg width="8" height="12"><path d="M1.500 1v10l5-5z" fill="none" stroke="#444"/></svg></button>
          <button aria-label="Close document"><svg width="12" height="12"><path d="M1 1l10 10M11 1L1 11" stroke="#444" stroke-width="1.500"/></svg></button>
        </div>
      </div>
    </main>
  </div>

  <footer class="status">
    <span class="msg">Modify diameter of 1 cylinder</span>
    <span class="cell s-rad">Radius = 85.73 mm</span>
    <button class="cell s-info" aria-label="Information"><svg width="18" height="18"><circle cx="9" cy="9" r="8" fill="#fff"/><path d="M9 3v3M9 7.500v7" stroke="#2d5c87" stroke-width="3"/></svg><svg width="9" height="6"><use href="#tri-up"/></svg></button>
    <span class="cell s-face">Face</span>
    <span class="cell s-count">1 Face</span>
    <div class="views">
      <button aria-label="Step" class="n"><svg width="12" height="22"><path d="M0 8l6-7 6 7z" fill="#6cb8f8"/><path d="M0 14h12l-6 7z" fill="#7d91a6"/></svg></button>
      <button aria-label="Revert selection"><svg width="22" height="20"><path d="M2 1v15l4-4 3 7 3-1-3-7h5z" fill="#fff" stroke="#333"/><path d="M14 4q7 1 5 8-1 4-5 5" fill="none" stroke="#6cb8f8" stroke-width="2"/><path d="M16 0v8l-6-4z" fill="#6cb8f8"/></svg></button>
      <button aria-label="Select mode" class="wide w-cursor"><svg width="19" height="20"><path d="M3 1v15l4-4 3 7 3-1-3-7h5z" fill="#fff" stroke="#333"/></svg><svg width="8" height="6"><use href="#tri-up"/></svg></button>
      <button aria-label="Box select" class="wide w-box"><svg width="22" height="18"><path d="M2 2h18v14H2z" fill="none" stroke="#6cb8f8" stroke-width="2.500" stroke-dasharray="5 3"/></svg><svg width="8" height="6"><use href="#tri-up"/></svg></button>
      <span class="vsep"></span>
      <button aria-label="Spin view" class="wide"><svg width="20" height="20"><path d="M2 9q8-5 17 1M9 3q6 7 1 14" fill="none" stroke="#6cb8f8" stroke-width="2.500"/><path d="M0 11l2-6 4 5zM20 7l-1 8-5-5zM5 4l7-4 1 6zM6 15l8 4-7 1z" fill="#6cb8f8"/></svg><svg width="8" height="6"><use href="#tri-up"/></svg></button>
      <button aria-label="Pan" class="pan"><svg width="20" height="20"><path d="M3 10h14M10 3v14" stroke="#6cb8f8" stroke-width="2.500"/><path d="M10 0l4 5H6zM10 20l4-5H6zM0 10l5-4v8zM20 10l-5-4v8z" fill="#6cb8f8"/></svg></button>
      <button aria-label="Zoom" class="wide"><svg width="20" height="20"><path d="M12 12l6 6" stroke="#6cb8f8" stroke-width="4"/><circle cx="8.500" cy="8.500" r="7" fill="#fff" stroke="#6cb8f8" stroke-width="2"/></svg><svg width="8" height="6"><use href="#tri-up"/></svg></button>
      <button aria-label="Previous view" class="nav"><svg width="20" height="16"><path d="M0 14l3-9 3 3 11-7 3 4-11 6 2 3z" fill="#6cb8f8"/></svg></button>
      <button aria-label="Next view" class="nav"><svg width="20" height="16"><path d="M20 1l-3 9-3-3-11 7-3-4 11-6-2-3z" fill="#7d91a6"/></svg></button>
    </div>
  </footer>
</div>

<svg class="callouts" width="1428" height="903" viewBox="0 0 1428 903">
  <g stroke="#000" stroke-width="3"><path d="M45.500 6v25M151 7v26M0 134h25M1074.500 4v114M1421 537.500h-218M1143.500 415v25M494 363.500h-38M767.500 898v-24M2 859.500h25M0 233.500h23M0 433.500h23M0 640.500h24"/></g>
  <path d="M45.500 41l-6-12h12zM151 42l-6-12h12zM35 134l-12-6v12zM1074.500 128l-6-12h12zM1193 537.500l12-6v12zM1143.500 449l-6-12h12zM445 363.500l12-6v12zM767.500 864l-6 12h12zM37 859.500l-12-6v12zM34 233.500l-12-6v12zM33 433.500l-12-6v12zM35 640.500l-12-6v12z"/>
  <g class="nums"><text x="27" y="21">1</text><text x="125" y="23">2</text><text x="3" y="125">3</text><text x="1052" y="20">4</text><text x="1404" y="530">5</text><text x="1126" y="425">6</text><text x="472" y="359" class="reg">7</text><text x="749" y="890">8</text><text x="12" y="856">9</text><text x="4" y="223">10</text><text x="1" y="423">11</text><text x="1" y="627">12</text></g>
</svg>
</body>
</html>
```

FILE: styles.css
```css
* { box-sizing: border-box; }
body {
  margin: 0;
  position: relative;
  padding: 30px;
  min-height: 100vh;
  background: #fff;
  font: 14px/16px "Liberation Sans", Arial, sans-serif;
  color: #000;
}
button { font: inherit; color: inherit; background: none; border: 0; padding: 0; margin: 0; }
h1, h2, h3, p, ul { margin: 0; padding: 0; font-weight: normal; font-size: 14px; list-style: none; }
svg { display: block; flex: none; }
.defs { position: absolute; width: 0; height: 0; }

.app {
  display: flex;
  flex-direction: column;
  min-height: calc(100vh - 60px);
  border: solid #2d5c87;
  border-width: 0 1px;
}

/* Title bar and ribbon tabs */
.top { background: #2d5c87; color: #fff; }
.titlebar { display: grid; grid-template-columns: 1fr auto 1fr; height: 47px; }
.quick { display: flex; align-items: center; height: 32px; padding-left: 7px; }
.qsep { width: 1px; height: 21px; margin: 0 11px 0 10px; background: #b8c7d6; }
.q-save { margin-left: 11px; }
.q-undo { margin-left: 12px; }
.q-more { color: #b3bdc9; margin: 0 9px; }
.q-custom { margin-left: 14px; }
.q-redo { margin-left: 1px; }
.title { font-size: 15px; line-height: 20px; padding-top: 12px; margin-left: 125px; }
.winbtns { display: flex; justify-content: flex-end; gap: 20px; padding: 12px 15px 0 0; height: 26px; }
.tabs { display: flex; height: 28px; }
.tab { padding: 0 15px; line-height: 28px; white-space: nowrap; }
.tab.file { width: 82px; padding: 0 3px 2px 0; }
.tab.on { background: #f1f1f1; color: #2d5c87; padding: 0 13px; }
.tabs-end { display: flex; align-items: center; gap: 16px; margin-left: auto; padding-right: 10px; }

/* Ribbon */
.ribbon { display: flex; padding: 3px 0 4px; background: #f1f1f1; border-bottom: 1px solid #2d5c87; }
.group { display: flex; flex-direction: column; border-right: 1px solid #c9c9c9; min-height: 103px; }
.group h2 { text-align: center; line-height: 16px; height: 15px; margin-top: 4px; }
.gbody { display: flex; height: 84px; }
.g-clip { width: 95px; }
.g-orient { width: 101px; }
.g-create { width: 308px; }
.g-modify { width: 98px; }
.g-cons { width: 366px; }
.g-edit { width: 215px; }
.g-end { width: 165px; }
.g-clip h2 { padding-left: 7px; }
.g-orient h2, .g-create h2, .g-edit h2, .g-end h2 { padding-left: 2px; }
.g-modify h2, .g-cons h2 { padding-left: 4px; }

.tool { display: flex; flex-direction: column; align-items: center; padding-top: 9px; gap: 5px; line-height: 15px; white-space: nowrap; }
.tool svg { width: 44px; height: 44px; }
.tool.high { padding-top: 3px; gap: 4px; }
.tool svg.caret { width: 6px; height: 3px; margin-top: 2px; }
.tool:disabled { color: #a2a2a2; }
.g-clip .tool { width: 66px; margin-left: 2px; }
.w-line { width: 52px; margin-left: 3px; }
.w-circle { width: 53px; }
.w-rect { width: 72px; }
.w-dim { width: 68px; margin-left: 7px; }
.w-auto { width: 86px; margin-left: 10px; }
.w-sel { width: 48px; margin-left: 5px; }
.tool.on { width: 51px; height: 82px; margin: 2px 1px 0 3px; padding-top: 8px; gap: 4px; background: #c8c8c8; border: 1px solid #b0b0b0; }
.w-move { width: 52px; }
.w-fill { width: 52px; }
.w-enable { width: 82px; }
.w-finish { width: 76px; }

.ib { display: grid; place-items: center; width: 20px; height: 20px; }
.ib svg { width: 20px; height: 20px; }
.stack { display: flex; flex-direction: column; gap: 7px; padding: 5px 0 0 0; margin-left: -3px; }
.icons { display: grid; grid-auto-rows: 20px; gap: 7px 11px; align-content: start; padding-top: 5px; }
.c4 { grid-template-columns: repeat(4, 20px); padding-left: 5px; }
.c3 { grid-template-columns: repeat(3, 20px); padding-left: 8px; }
.c6 { grid-template-columns: repeat(6, 20px); padding-left: 11px; }
.gray svg { fill: none; stroke: #8f8f8f; stroke-width: 4; }
.ib.sel { width: 30px; height: 27px; margin: -4px -5px; background: #c4c4c4; border: 1px solid #aaa; }
.orient { flex-direction: column; padding: 7px 0 0 9px; gap: 7px; }
.line { display: flex; align-items: center; height: 20px; gap: 3px; white-space: nowrap; }
.line .caret { margin-left: 12px; }
.line > svg:first-child { width: 20px; height: 20px; }
div.line .caret { margin-left: 6px; }
.spin { margin-left: 8px; }

/* Workspace */
.work { display: flex; flex: 1; background: #fff; }
.side { display: flex; flex-direction: column; width: 315px; flex: none; padding-top: 3px; border-left: 4px solid #f7f7fc; }
.panel { display: flex; flex-direction: column; width: 307px; }
.phead { display: flex; justify-content: space-between; height: 26px; margin-left: 1px; padding: 6px 8px 0 3px; background: #f7f7fc; }
.tree { height: 138px; padding-top: 4px; }
.tree li { display: flex; align-items: center; height: 20px; padding-left: 31px; }
.tree li.root { padding-left: 11px; margin-bottom: 1px; font-weight: bold; font-size: 11px; }
.tree input { appearance: none; width: 12px; height: 12px; margin: 0 3px 0 7px; border: 1px solid #555; display: grid; place-items: center; background: #fff; }
.tree li:not(.root) input { margin-left: 8px; }
.tree input::after { content: ""; width: 4px; height: 7px; margin-top: -2px; border: solid #000; border-width: 0 2px 2px 0; transform: rotate(45deg); }
.tree label { margin-left: 3px; padding: 0 2px; line-height: 18px; }
.hit { background: #ffe674; }
.ptabs { display: flex; height: 32px; padding: 0 0 5px 4px; background: #f7f7fc; }
.ptabs button { padding: 3px 5px 0 4px; }
.ptabs .on { color: #2d5c87; background: #f0f0f0; border: solid #2d5c87; border-width: 0 1px; padding: 3px 4px 0; }

.p-options { margin-top: 4px; }
.general { display: flex; align-items: center; gap: 7px; height: 30px; margin: 1px 0 0 1px; padding-left: 6px; background: #f7f7fc; }
.opts { height: 150px; padding: 11px 0 0 7px; }
.merge { display: flex; gap: 10px; height: 22px; padding-left: 6px; margin-bottom: 5px; }
.merge button { display: flex; align-items: center; gap: 6px; }
.orow { display: flex; height: 30px; }
.orow button { display: grid; place-items: center; width: 30px; height: 30px; }
.orow svg { width: 20px; height: 20px; }
.orow .on { background: #c8c8c8; border: 1px solid #adadad; }
.orow .gap { margin-left: 13px; }
.orow .dim { color: #999; }

.grid { height: 154px; border: 1px solid #9b9b9f; background: #fff; overflow: hidden; }
.grid table { width: 100%; border-collapse: collapse; table-layout: fixed; margin-top: 1px; }
.grid td, .grid th { height: 19px; padding: 0; line-height: 18px; text-align: left; white-space: nowrap; border-bottom: 1px solid #e2e2e7; }
.col-gut { width: 21px; }
.col-key { width: 109px; }
.grid td.gut { background: #e2e2e7; padding-left: 5px; }
.grid .cat th { font-size: 15px; background: #e2e2e7; padding-left: 4px; }
.grid .key { padding-left: 4px; border-right: 1px solid #e2e2e7; }
.grid .val { padding-left: 3px; }
.grid td.color { padding-left: 1px; }
.mute { color: #777; }
.shade .key { background: #e2e2e7; }
.swatch { display: inline-block; width: 20px; height: 16px; margin: 0 7px 2px 0; vertical-align: middle; background: #af8faf; border: 1px solid #000; }

.main { display: flex; flex-direction: column; flex: 1; min-width: 0; padding-top: 6px; background: #fff; }
.view { position: relative; flex: 1; margin: 0 7px 0 3px; padding: 9px 13px; border: 1px solid #aca88f; outline: 1px solid #f1eddc; outline-offset: -2px; }
.hint { font-size: 17px; line-height: 20px; color: #777; margin-bottom: 8px; }
.guide { display: grid; place-items: center; width: 32px; height: 32px; background: #fff; border: 1px solid #777; border-radius: 5px; }
.guide svg { width: 30px; height: 30px; }
.guide.big { width: 48px; height: 48px; margin-left: 1px; border-radius: 7px; }
.guide.big svg { width: 40px; height: 40px; }
.guides { display: grid; grid-template-columns: 32px 32px; gap: 8px; margin-top: 15px; }
.guides.second { margin-top: 31px; }
.faint { opacity: .45; }
.model { position: absolute; left: 390px; top: 177px; }
.mini { position: absolute; left: 666px; top: 224px; display: flex; align-items: center; gap: 11px; height: 31px; padding: 0 7px 0 6px; border: 1px solid #b9c9dc; background: #fff; }
.mini svg { width: 20px; height: 20px; }
.msep { width: 1px; height: 20px; margin: 0 -2px 0 -4px; background: #ddd; }
.entry { position: absolute; left: 714px; top: 299px; display: flex; height: 26px; border: 1px solid #999; background: #fff; font-size: 16px; }
.entry label { width: 17px; line-height: 24px; text-align: center; border-right: 1px solid #999; }
.entry input { width: 68px; height: 20px; margin: 2px; padding: 0; border: 0; font: inherit; color: #fff; background: #0a75d7; }
.pbtn { position: absolute; left: 808px; top: 296px; width: 30px; height: 30px; display: grid; place-items: center; background: #0a8ddb; color: #fff; }
.pbtn b { width: 16px; height: 25px; border: 1px solid #fff; line-height: 23px; font-size: 16px; }
.triad { position: absolute; left: 52px; bottom: 48px; font: bold 40px "Open Sans", sans-serif; }

.docs { display: flex; justify-content: space-between; height: 32px; margin-top: 3px; padding-left: 3px; background: #f7f7fc; border-top: 1px solid #777; border-left: 1px solid #777; }
.doc { display: flex; align-items: center; gap: 5px; height: 27px; padding: 0 6px 0 3px; background: #fafafe; color: #2d5c87; border: solid #2d5c87; border-width: 0 1px 2px; font-size: 13px; font-weight: bold; }
.docnav { display: flex; gap: 10px; padding: 7px 9px 0 0; align-items: flex-start; }

/* Status bar */
.status { display: flex; align-items: center; height: 35px; padding: 3px 0 0 12px; background: #2d5c87; color: #fff; }
.msg { flex: 1; }
.cell { height: 29px; line-height: 29px; text-align: center; border-left: 1px solid #7f9bb5; }
.s-rad { width: 133px; }
.s-info { display: flex; align-items: center; gap: 6px; width: 45px; padding-left: 6px; }
.s-face { width: 108px; }
.s-count { width: 162px; }
.views { display: flex; align-items: center; width: 341px; padding-left: 5px; }
.views .n { margin-right: 10px; }
.wide { display: flex; align-items: center; gap: 5px; margin-left: 5px; }
.w-cursor { margin-left: 8px; }
.w-box { margin-left: 9px; }
.vsep { width: 1px; height: 29px; margin-left: 5px; background: #7f9bb5; }
.pan { margin-left: 10px; }
.views .pan + .wide { margin-left: 10px; }
.nav { margin-left: 10px; }

.callouts { position: absolute; left: 0; top: 0; pointer-events: none; }
.nums { font: bold 20px "Liberation Serif", "Times New Roman", serif; }
.nums .reg { font-weight: normal; }
```
